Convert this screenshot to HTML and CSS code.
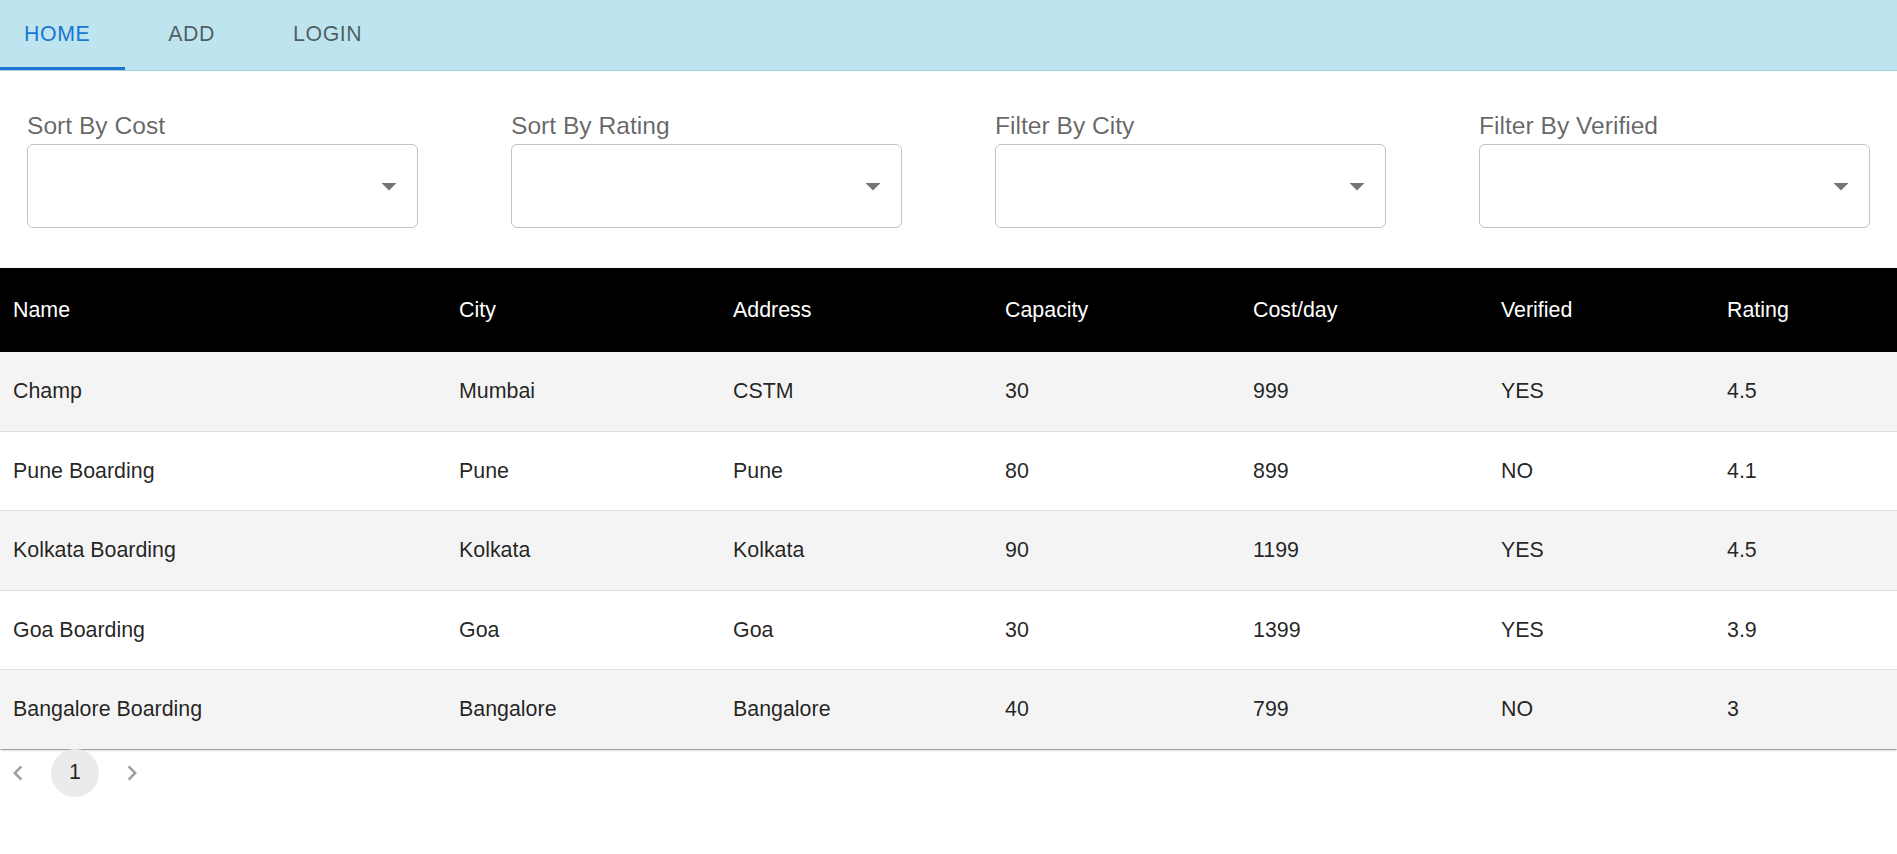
FILE: index.html
```html
<!DOCTYPE html>
<html lang="en">
<head>
<meta charset="utf-8">
<title>Boarding List</title>
<link rel="stylesheet" href="styles.css">
</head>
<body>
<header class="navbar">
  <nav class="tabs">
    <a class="tab active">HOME</a>
    <a class="tab">ADD</a>
    <a class="tab">LOGIN</a>
  </nav>
</header>

<section class="filters">
  <div class="field">
    <label class="field-label">Sort By Cost</label>
    <div class="select">
      <svg class="arrow" viewBox="0 0 24 24"><path d="M7 10l5 5 5-5z"/></svg>
    </div>
  </div>
  <div class="field">
    <label class="field-label">Sort By Rating</label>
    <div class="select">
      <svg class="arrow" viewBox="0 0 24 24"><path d="M7 10l5 5 5-5z"/></svg>
    </div>
  </div>
  <div class="field">
    <label class="field-label">Filter By City</label>
    <div class="select">
      <svg class="arrow" viewBox="0 0 24 24"><path d="M7 10l5 5 5-5z"/></svg>
    </div>
  </div>
  <div class="field">
    <label class="field-label">Filter By Verified</label>
    <div class="select">
      <svg class="arrow" viewBox="0 0 24 24"><path d="M7 10l5 5 5-5z"/></svg>
    </div>
  </div>
</section>

<div class="table-wrap">
  <table class="data">
    <thead>
      <tr>
        <th class="c-name">Name</th>
        <th class="c-city">City</th>
        <th class="c-addr">Address</th>
        <th class="c-cap">Capacity</th>
        <th class="c-cost">Cost/day</th>
        <th class="c-ver">Verified</th>
        <th class="c-rate">Rating</th>
      </tr>
    </thead>
    <tbody>
      <tr><td>Champ</td><td>Mumbai</td><td>CSTM</td><td>30</td><td>999</td><td>YES</td><td>4.5</td></tr>
      <tr><td>Pune Boarding</td><td>Pune</td><td>Pune</td><td>80</td><td>899</td><td>NO</td><td>4.1</td></tr>
      <tr><td>Kolkata Boarding</td><td>Kolkata</td><td>Kolkata</td><td>90</td><td>1199</td><td>YES</td><td>4.5</td></tr>
      <tr><td>Goa Boarding</td><td>Goa</td><td>Goa</td><td>30</td><td>1399</td><td>YES</td><td>3.9</td></tr>
      <tr><td>Bangalore Boarding</td><td>Bangalore</td><td>Bangalore</td><td>40</td><td>799</td><td>NO</td><td>3</td></tr>
    </tbody>
  </table>
</div>

<nav class="pagination">
  <span class="page-nav">
    <svg viewBox="0 0 24 24"><path d="M15.41 7.41 14 6l-6 6 6 6 1.41-1.41L10.83 12z"/></svg>
  </span>
  <span class="page current">1</span>
  <span class="page-nav">
    <svg viewBox="0 0 24 24"><path d="M10 6 8.59 7.41 13.17 12l-4.58 4.59L10 18l6-6z"/></svg>
  </span>
</nav>
</body>
</html>
```

FILE: styles.css
```css
* {
  box-sizing: border-box;
}

html, body {
  margin: 0;
  padding: 0;
  background: #ffffff;
  font-family: "Liberation Sans", Arial, Helvetica, sans-serif;
  color: rgba(0, 0, 0, 0.87);
}

/* ---------- Navbar ---------- */
.navbar {
  background: #bee5ef;
  height: 71px;
  border-bottom: 1px solid #a9d0da;
}

.tabs {
  display: flex;
  height: 70px;
  gap: 19px;
}

.tab {
  position: relative;
  display: flex;
  align-items: center;
  padding: 0 35px 2px 24px;
  font-size: 21.3px;
  letter-spacing: 0.6px;
  color: rgba(0, 0, 0, 0.6);
  text-transform: uppercase;
  cursor: pointer;
}

.tab.active {
  color: #1976d2;
}

.tab.active::after {
  content: "";
  position: absolute;
  left: 0;
  right: 0;
  bottom: 0;
  height: 3px;
  background: #1976d2;
}

/* ---------- Filters ---------- */
.filters {
  display: grid;
  grid-template-columns: repeat(4, 1fr);
  column-gap: 93px;
  padding: 37px 27px 40px;
}

.field {
  display: flex;
  flex-direction: column;
}

.field-label {
  font-size: 24.6px;
  line-height: 36px;
  color: rgba(0, 0, 0, 0.6);
}

.select {
  height: 84px;
  border: 1px solid #c4c4c4;
  border-radius: 6px;
  display: flex;
  align-items: center;
  justify-content: flex-end;
  padding-right: 10px;
  background: #fff;
}

.arrow {
  width: 36px;
  height: 36px;
  fill: rgba(0, 0, 0, 0.54);
}

/* ---------- Table ---------- */
.table-wrap {
  box-shadow: 0 2px 1px -1px rgba(0, 0, 0, 0.2), 0 1px 1px 0 rgba(0, 0, 0, 0.14), 0 1px 3px 0 rgba(0, 0, 0, 0.12);
}

.data {
  width: 100%;
  table-layout: fixed;
  border-collapse: collapse;
  font-size: 21.4px;
}

.data th,
.data td {
  text-align: left;
  padding: 24px 8px 24px 13px;
  white-space: nowrap;
}

.data th {
  background: #000;
  color: #fff;
  font-weight: normal;
  line-height: 36px;
}

.data td {
  line-height: 30.5px;
  color: rgba(0, 0, 0, 0.87);
}

.data tbody tr {
  border-bottom: 1px solid #e0e0e0;
}

.data tbody tr:last-child {
  border-bottom: none;
}

.data tbody tr:nth-child(odd) {
  background: #f4f4f4;
}

.c-name { width: 446px; }
.c-city { width: 274px; }
.c-addr { width: 272px; }
.c-cap  { width: 248px; }
.c-cost { width: 248px; }
.c-ver  { width: 226px; }
.c-rate { width: 183px; }

/* ---------- Pagination ---------- */
.pagination {
  display: flex;
  align-items: center;
  gap: 15px;
  height: 48px;
}

.page-nav {
  width: 36px;
  height: 48px;
  display: flex;
  align-items: center;
  justify-content: center;
}

.page-nav svg {
  width: 30px;
  height: 30px;
  fill: rgba(0, 0, 0, 0.38);
}

.page {
  width: 48px;
  height: 48px;
  border-radius: 50%;
  display: flex;
  align-items: center;
  justify-content: center;
  font-size: 21.4px;
  color: rgba(0, 0, 0, 0.87);
}

.page.current {
  background: #ebebeb;
}
```
